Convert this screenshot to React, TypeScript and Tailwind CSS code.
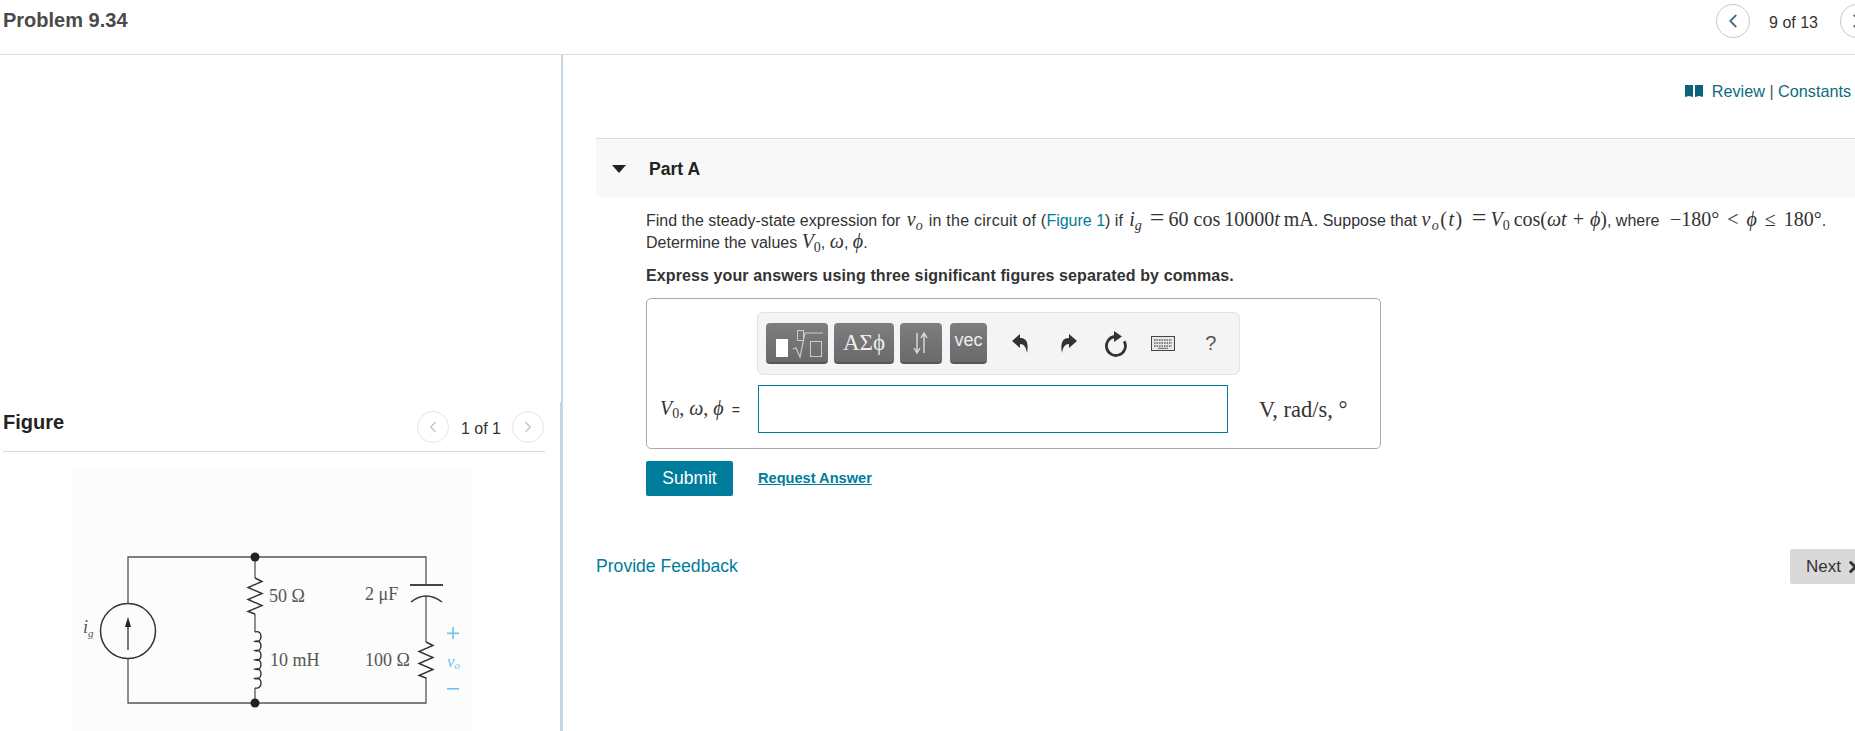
import { ChevronLeft, ChevronRight } from "lucide-react"

const serif = "font-['Liberation_Serif',serif]"
const subCls = "text-[14px] not-italic"
const subItal = "text-[14px] italic"

const Ital = ({ children, className }: any) => <i className={serif + " text-[20px] " + (className || "")}>{children}</i>
const Rom = ({ children, className }: any) => <span className={serif + " text-[20px] " + (className || "")}>{children}</span>
const Eq = () => <span className="text-[26px] leading-[0] ml-[8px] mr-[4px]">=</span>

const NavCircle = ({ dir, faint }: { dir: "left" | "right"; faint?: boolean }) => (
    <div className={"flex items-center justify-center rounded-full border bg-white shrink-0 " + (faint ? "w-[32px] h-[32px] border-[#e4e4e4] text-[#c4c4c4]" : "w-[34px] h-[34px] border-[#c8c8c8] text-[#49708a]")}>
        {dir === "left" ? <ChevronLeft size={faint ? 18 : 22} strokeWidth={faint ? 1.8 : 2} /> : <ChevronRight size={faint ? 18 : 22} strokeWidth={faint ? 1.8 : 2} />}
    </div>
)

const Resistor = ({ x, y }: { x: number; y: number }) => (
    <path
        d={`M${x} ${y} l7 3.5 l-14 6 l14 6 l-14 6 l14 6 l-14 6 l7 2.5`}
        fill="none"
        stroke="#333"
        strokeWidth="1.4"
    />
)

const Circuit = () => (
    <div className="ml-[73px] mt-[16px] w-[400px] h-[300px] bg-[#fcfcfc]">
        <svg width="400" height="300" viewBox="1 0 400 300">
            <g fill="none" stroke="#555" strokeWidth="1.3">
                <path d="M56 136 V89 H354 V117" />
                <path d="M56 191 V235 H354 V209" />
                <path d="M183 89 V110" />
                <path d="M183 146 V164" />
                <path d="M183 220 V235" />
                <path d="M354 128 V174" />
                <circle cx="56" cy="163" r="27.5" stroke="#333" strokeWidth="1.5" />
                <path d="M56 156 V182" stroke="#333" />
                <path d="M338 117 H371" stroke="#444" strokeWidth="2" />
                <path d="M339 134 Q354 122 370 134" stroke="#333" strokeWidth="1.5" />
                <path d="M183 164 c8 -3 8 12 0 9.3 c8 -3 8 12 0 9.3 c8 -3 8 12 0 9.3 c8 -3 8 12 0 9.3 c8 -3 8 12 0 9.3 c8 -3 8 12 0 9.3" stroke="#333" strokeWidth="1.4" />
            </g>
            <path d="M56 149 l-3 10 h6 z" fill="#222" />
            <circle cx="183" cy="89" r="4.5" fill="#222" />
            <circle cx="183" cy="235" r="4.5" fill="#222" />
            <Resistor x={183} y={110} />
            <Resistor x={354} y={174} />
            <g fontFamily="'Liberation Serif', serif" fontSize="18" fill="#555">
                <text x="197" y="134">50 Ω</text>
                <text x="293" y="132">2 μF</text>
                <text x="198" y="198">10 mH</text>
                <text x="293" y="198">100 Ω</text>
                <text x="11" y="165" fontStyle="italic">
                    i<tspan fontSize="11" dy="4">g</tspan>
                </text>
            </g>
            <g fill="#6cc4ee" fontFamily="'Liberation Serif', serif" fontStyle="italic">
                <rect x="375" y="164.5" width="12" height="1.6" />
                <rect x="380.2" y="159" width="1.6" height="12" />
                <rect x="375" y="220" width="12" height="1.6" />
                <text x="375" y="199" fontSize="17">v<tspan fontSize="11" dy="2">o</tspan></text>
            </g>
        </svg>
    </div>
)

const ToolButton = ({ children, className }: any) => (
    <div className={"h-[41px] rounded-[4px] flex items-center justify-center text-[#eee] bg-gradient-to-b from-[#7e7e80] to-[#6a6a6c] border-b-2 border-[#555] " + className}>
        {children}
    </div>
)

const IconCell = ({ children }: any) => <div className="w-[47.5px] flex justify-center items-center">{children}</div>

const Toolbar = () => (
    <div className="ml-[110px] w-[483px] h-[63px] flex items-center pl-[8px] rounded-[6px] border border-[#e2e2e2] bg-[#f4f4f4]">
        <ToolButton className="w-[62px] mr-[6px]">
            <svg width="62" height="39" viewBox="0 0 62 39" fill="none">
                <rect x="10" y="16" width="12" height="18" fill="#fff" />
                <rect x="31.5" y="7.5" width="6" height="10" stroke="#ccc" />
                <path d="M27 26 l3 -1 l4 9 l5 -24 h18" stroke="#ccc" strokeWidth="1.2" />
                <rect x="44.5" y="18.5" width="11" height="15" stroke="#ccc" />
            </svg>
        </ToolButton>
        <ToolButton className={"w-[60px] mr-[6px] text-[23px] " + serif}>ΑΣϕ</ToolButton>
        <ToolButton className="w-[42px] mr-[8px]">
            <svg width="22" height="26" viewBox="0 0 22 26" fill="none" stroke="#ddd" strokeWidth="1.4">
                <path d="M7 3 V22 M4 18 L7 23 L10 18" />
                <path d="M14 23 V4 M11 8 L14 3 L17 8" />
            </svg>
        </ToolButton>
        <ToolButton className="w-[37px] text-[18px] pb-[5px] mr-[10px]">vec</ToolButton>
        <IconCell>
            <svg width="20" height="22" viewBox="0 0 20 22" fill="#333">
                <path d="M1 8 L9 1 V5 C15 5 18 9 16 20 C15 14 13 11 9 11 V15 Z" />
            </svg>
        </IconCell>
        <IconCell>
            <svg width="20" height="22" viewBox="0 0 20 22" fill="#333">
                <path d="M19 8 L11 1 V5 C5 5 2 9 4 20 C5 14 7 11 11 11 V15 Z" />
            </svg>
        </IconCell>
        <IconCell>
            <svg width="24" height="26" viewBox="0 0 24 26" fill="none">
                <path d="M20.2 10.3 A9.5 9.5 0 1 1 11 5.5" stroke="#333" strokeWidth="2.8" />
                <path d="M10 0 L18 5.5 L10 11 Z" fill="#333" />
            </svg>
        </IconCell>
        <IconCell>
            <svg width="24" height="15" viewBox="0 0 24 15">
                <rect x="0.5" y="0.5" width="23" height="14" fill="#e8e8e8" stroke="#444" />
                <path d="M3 4 H21 M3 7 H21 M3 10 H21" stroke="#666" strokeWidth="1.4" strokeDasharray="1.6 0.9" />
                <path d="M7 12.3 H17" stroke="#666" />
            </svg>
        </IconCell>
        <IconCell>
            <span className="text-[20px] text-[#555]">?</span>
        </IconCell>
    </div>
)

export default function App() {
    return (
        <div className="w-[1855px] h-[731px] overflow-hidden bg-white text-[16px] leading-[21px] text-[#333] font-['Liberation_Sans',sans-serif]">
            <div className="h-[55px] flex items-start justify-between border-b border-[#dcdcdc]">
                <div className="pl-[3px] pt-[10px] text-[20px] font-bold text-[#4a4a4a]">Problem 9.34</div>
                <div className="flex items-center pt-[4px] mr-[-19px]">
                    <NavCircle dir="left" />
                    <span className="ml-[19px] mr-[22px] pt-[3px]">9 of 13</span>
                    <NavCircle dir="right" />
                </div>
            </div>
            <div className="flex h-[676px]">
                <div className="w-[563px] shrink-0 flex flex-col">
                    <div className="h-[347px] shrink-0 border-r-2 border-[#c4d6e6]" />
                    <div className="flex-1 pt-[6px] border-r-[3px] border-[#c4d6e6]">
                        <div className="ml-[3px] w-[542px] h-[44px] flex justify-between border-b border-[#dcdcdc]">
                            <div className="text-[20px] font-bold text-[#222] pt-[4px]">Figure</div>
                            <div className="flex items-start pr-[1px] mt-[3px]">
                                <NavCircle dir="left" faint />
                                <span className="ml-[12px] mr-[11px] pt-[7px]">1 of 1</span>
                                <NavCircle dir="right" faint />
                            </div>
                        </div>
                        <Circuit />
                    </div>
                </div>
                <div className="flex-1 pl-[33px]">
                    <div className="h-[83px] flex items-center justify-end text-[#0e6a80] text-[16.2px] pr-[4px] pb-[10px]">
                        <svg width="18" height="13" viewBox="0 0 18 13" fill="#0b6478" className="mr-[9px]">
                            <path d="M0 0 H8 V12 L4 11 L0 12 Z M10 0 H18 V12 L14 11 L10 12 Z" />
                        </svg>
                        <span>Review <span className="text-[#555]">|</span> Constants</span>
                    </div>
                    <div className="h-[59px] flex items-center border-t border-[#dcdcdc] bg-[#f8f8f8] font-bold text-[17.6px] text-[#222] pt-[2px]">
                        <div className="ml-[16px] mr-[23px] w-0 h-0 border-x-[7px] border-x-transparent border-t-[8px] border-t-[#222]" />
                        Part A
                    </div>
                    <div className="pl-[50px] pt-[12px]">
                        <div className="whitespace-nowrap">
                            Find the steady-state expression for <Ital className="ml-[2px] mr-[6px]">v<sub className={subItal}>o</sub></Ital>
                            <span className="tracking-[0.25px]">in the circuit of (</span><span className="text-[#007c9c]">Figure 1</span>) if <Ital className="ml-[2px]">i<sub className={subItal}>g</sub></Ital>
                            <Rom><Eq />60 cos{"\u2009"}10000<i>t</i>{"\u2009"}mA</Rom>. Suppose that <Ital className="tracking-[1.5px]">v<sub className={subItal}>o</sub></Ital>
                            <Rom className="tracking-[1.5px]">(<i>t</i>)</Rom>
                            <Rom><Eq /><i>V</i><sub className={subCls}>0</sub>{"\u2009"}cos(<i>ωt</i><span className="mx-[6px]">+</span><i>ϕ</i>)</Rom>, where <Rom className="ml-[6px]">−180°<span className="mx-[8px]">&lt;</span><i>ϕ</i><span className="mx-[8px]">≤</span>180°</Rom>.
                        </div>
                        <div>
                            Determine the values <Ital>V<sub className={subCls}>0</sub></Ital>, <Ital>ω</Ital>, <Ital>ϕ</Ital>.
                        </div>
                        <div className="mt-[12px] font-bold tracking-[0.11px]">Express your answers using three significant figures separated by commas.</div>
                        <div className="mt-[12px] w-[735px] h-[151px] rounded-[5px] border border-[#aaa] pt-[13px]">
                            <Toolbar />
                            <div className="mt-[10px] flex items-center">
                                <div className="w-[111px] pl-[13px] whitespace-nowrap">
                                    <Rom><i>V</i><sub className={subCls}>0</sub>, <i>ω</i>, <i>ϕ</i></Rom><span className="ml-[8px] text-[14px]">=</span>
                                </div>
                                <div className="w-[470px] h-[48px] border border-[#007c9c] bg-white" />
                                <div className={"ml-[31px] text-[22.5px] " + serif}>V, rad/s, °</div>
                            </div>
                        </div>
                        <div className="mt-[12px] flex items-center">
                            <div className="w-[87px] h-[35px] flex items-center justify-center rounded-[2px] bg-[#007c9c] text-white text-[17.5px]">Submit</div>
                            <div className="ml-[25px] text-[14.6px] font-bold text-[#007c9c] underline pb-[1px]">Request Answer</div>
                        </div>
                    </div>
                    <div className="mt-[53px] flex items-center justify-between">
                        <span className="text-[17.6px] text-[#007c9c]">Provide Feedback</span>
                        <div className="w-[80px] h-[35px] mr-[-15px] flex items-center pl-[16px] rounded-[2px] bg-[#d9d9d9] text-[17px] text-[#333] whitespace-nowrap">
                            Next
                            <ChevronRight size={18} strokeWidth={4} className="ml-[3px]" />
                        </div>
                    </div>
                </div>
            </div>
        </div>
    )
}
